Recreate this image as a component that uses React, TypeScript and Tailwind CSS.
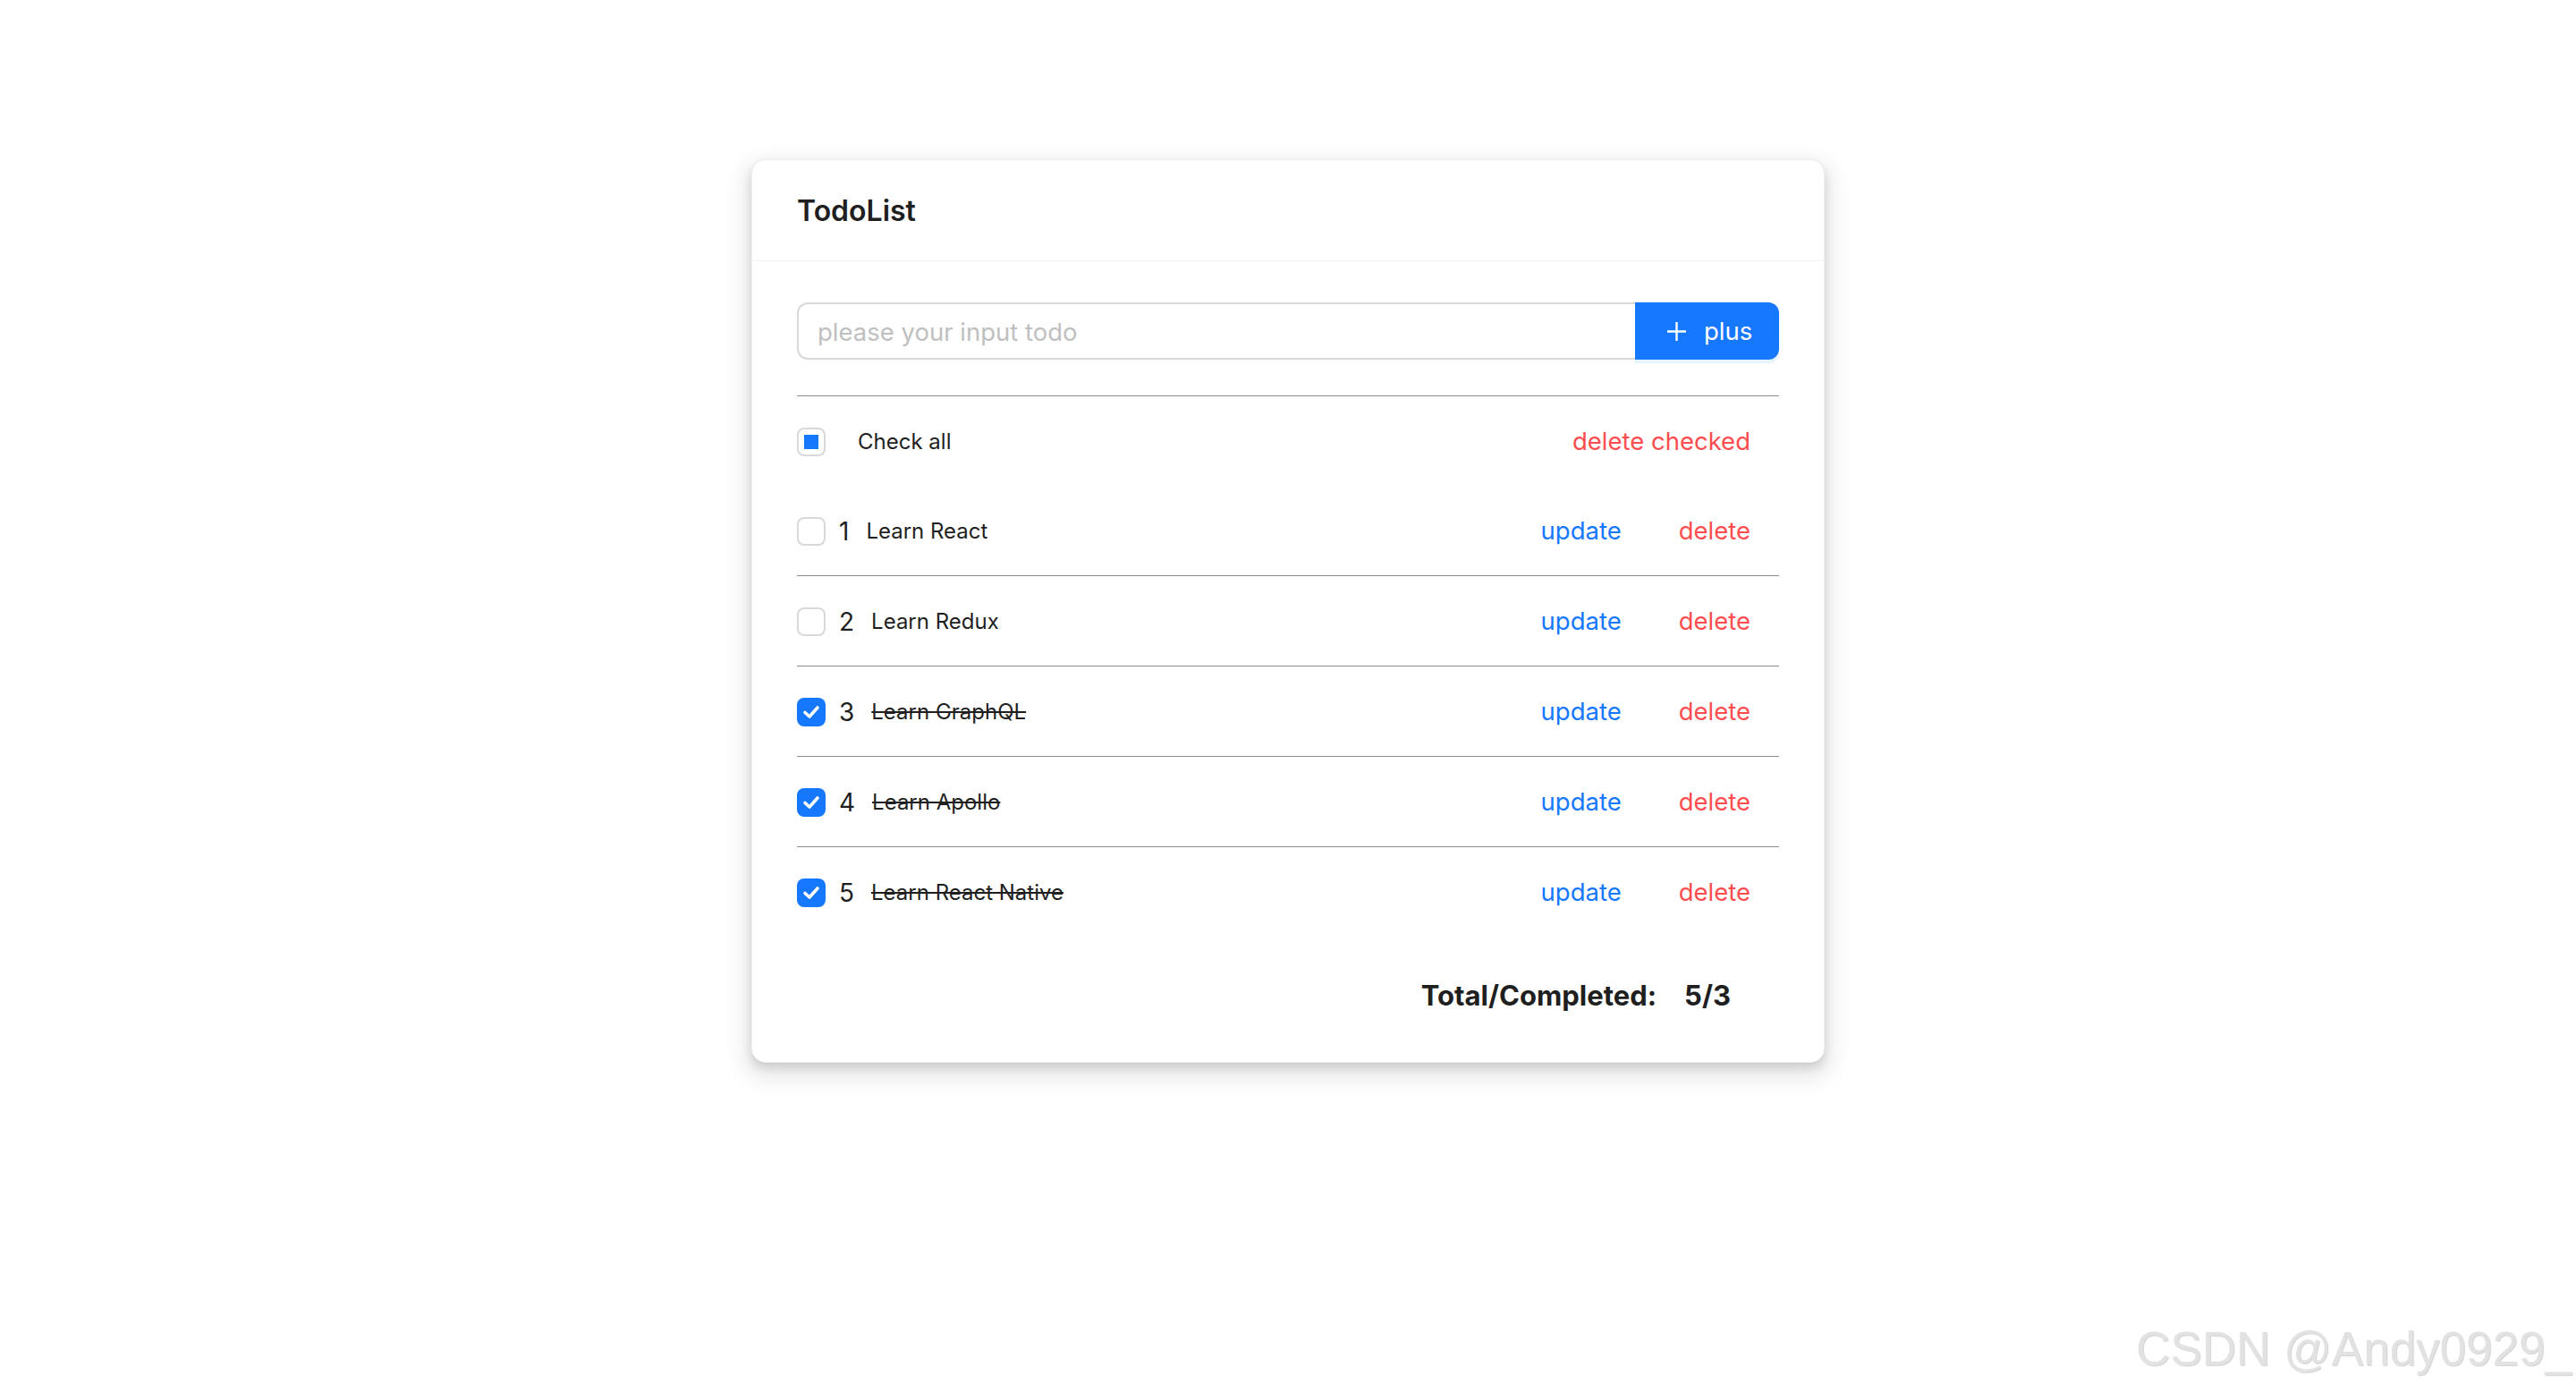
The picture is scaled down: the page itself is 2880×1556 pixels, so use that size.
import { useState } from 'react';

interface Todo {
  id: number;
  title: string;
  done: boolean;
}

const initialTodos: Todo[] = [
  { id: 1, title: 'Learn React', done: false },
  { id: 2, title: 'Learn Redux', done: false },
  { id: 3, title: 'Learn GraphQL', done: true },
  { id: 4, title: 'Learn Apollo', done: true },
  { id: 5, title: 'Learn React Native', done: true },
];

function Checkbox({ state }: { state: 'checked' | 'unchecked' | 'indeterminate' }) {
  if (state === 'checked') {
    return (
      <span className="flex h-[32px] w-[32px] shrink-0 items-center justify-center rounded-[8px] bg-[#1677ff]">
        <svg width="22" height="22" viewBox="0 0 22 22" fill="none">
          <polyline points="4,11.5 9,16 18,6" stroke="#ffffff" strokeWidth="3.6" strokeLinecap="round" strokeLinejoin="round" />
        </svg>
      </span>
    );
  }
  return (
    <span className="flex h-[32px] w-[32px] shrink-0 items-center justify-center rounded-[8px] border-2 border-[#d9d9d9] bg-white">
      {state === 'indeterminate' && <span className="h-[16px] w-[16px] bg-[#1677ff]" />}
    </span>
  );
}

export default function App() {
  const [todos] = useState<Todo[]>(initialTodos);
  const completed = todos.filter(t => t.done).length;

  return (
    <div className="relative min-h-[1556px] bg-white pt-[178px] font-['Inter','Liberation_Sans',sans-serif] text-[#1f1f1f]">
      <div className="mx-auto w-[1200px] rounded-[16px] border border-[#f0f0f0] bg-white shadow-[0_2px_4px_-4px_rgba(0,0,0,0.16),0_6px_12px_0_rgba(0,0,0,0.12),0_10px_24px_8px_rgba(0,0,0,0.09)]">
        {/* Header */}
        <div className="flex h-[113px] items-center border-b border-[#f0f0f0] px-[50px] pt-[2px]">
          <h1 className="text-[32px] font-semibold">TodoList</h1>
        </div>

        {/* Body */}
        <div className="px-[50px] pt-[46px] pb-[50px]">
          <div className="flex h-[64px]">
            <input
              placeholder="please your input todo"
              className="h-full flex-1 rounded-l-[12px] border-2 border-r-0 border-[#d9d9d9] px-[21px] pt-[2px] text-[27.5px] outline-none placeholder:text-[#bfbfbf]"
            />
            <button className="flex h-full w-[161px] items-center gap-[19px] rounded-r-[12px] bg-[#1677ff] pt-[2px] pl-[35px] text-[27.5px] text-white shadow-[0_4px_0_rgba(5,145,255,0.1)]">
              <svg width="23" height="23" viewBox="0 0 23 23" fill="none" className="-mt-[2px]">
                <path d="M11.5 1v21M1 11.5h21" stroke="#ffffff" strokeWidth="2.4" />
              </svg>
              plus
            </button>
          </div>

          <div className="mt-[40px] h-px bg-[#8c8c8c]" />

          {/* Check all */}
          <div className="flex h-[100px] items-center pt-[2px]">
            <Checkbox state="indeterminate" />
            <span className="ml-[36px] text-[24px]">Check all</span>
            <button className="ml-auto px-[32px] text-[27.5px] text-[#ff4d4f]">delete checked</button>
          </div>

          {/* Rows */}
          <ul>
            {todos.map((todo, i) => (
              <li
                key={todo.id}
                className={`flex items-center pt-[2px] ${i < todos.length - 1 ? 'h-[101px] border-b border-[#8c8c8c]' : 'h-[100px]'}`}
              >
                <Checkbox state={todo.done ? 'checked' : 'unchecked'} />
                <span className="ml-[15px] text-[28px]">{todo.id}</span>
                <span className={`ml-[19px] text-[24px] ${todo.done ? 'line-through' : ''}`}>{todo.title}</span>
                <div className="ml-auto flex">
                  <button className="px-[32px] text-[27.5px] text-[#1677ff]">update</button>
                  <button className="px-[32px] text-[27.5px] text-[#ff4d4f]">delete</button>
                </div>
              </li>
            ))}
          </ul>

          {/* Footer */}
          <div className="mt-[42px] flex h-[48px] items-center justify-end gap-[31px] pr-[54px] text-[31px] font-bold">
            <span>Total/Completed:</span>
            <span>
              {todos.length}/{completed}
            </span>
          </div>
        </div>
      </div>

      <div className="absolute top-[1481px] right-[5px] font-['Liberation_Sans',sans-serif] text-[53px] leading-none text-[#e2e2e2] [text-shadow:1px_1px_1px_rgba(0,0,0,0.18)]">
        CSDN @Andy0929_
      </div>
    </div>
  );
}
